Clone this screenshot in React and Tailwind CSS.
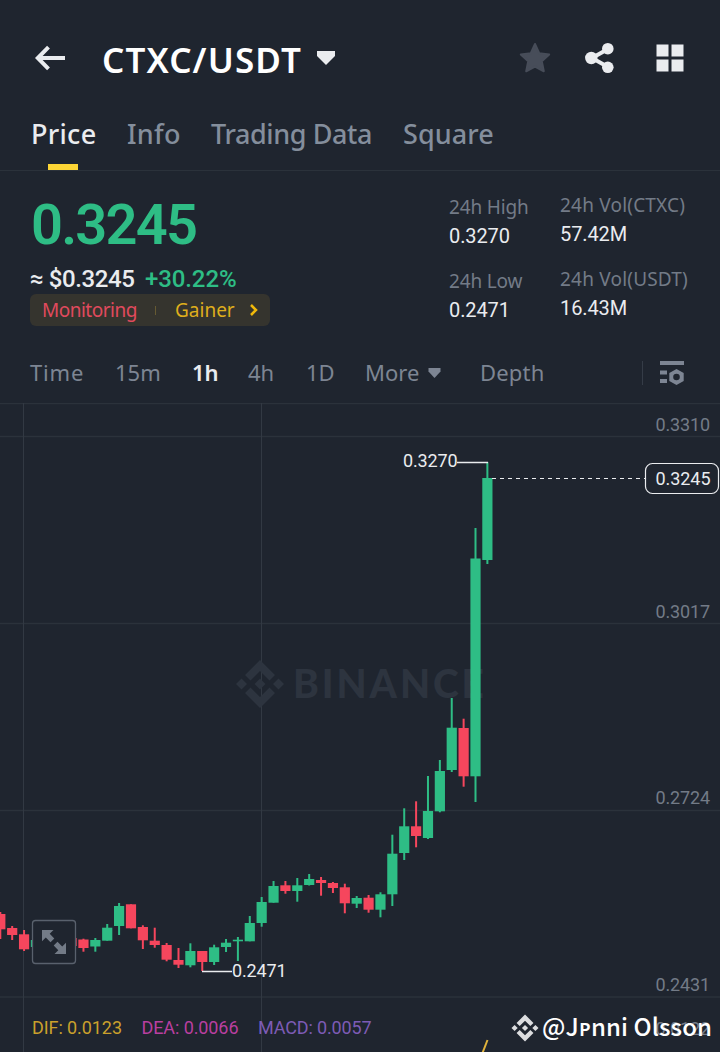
import { useState } from 'react'

const UP = '#2ebd85'
const DOWN = '#f6465d'

// [color, high, bodyTop, bodyBottom, low]
const CANDLES = [
  [DOWN, 912, 914, 929.3, 939],
  [DOWN, 926, 928, 935, 940],
  [DOWN, 930, 934.3, 949.3, 951],
  [UP, 940, 940, 947, 947],
  [UP, 936, 938, 945, 948],
  [DOWN, 934, 937, 944, 948],
  [DOWN, 936, 938, 946, 949],
  [DOWN, 938.7, 939.5, 948, 951.7],
  [UP, 938, 940, 946.5, 951.7],
  [UP, 924, 927.7, 940.7, 940.7],
  [UP, 903, 906, 926, 935],
  [DOWN, 904.3, 904.3, 928.3, 928.3],
  [DOWN, 925.3, 927, 940.3, 949],
  [DOWN, 927.7, 940.7, 945, 947.7],
  [DOWN, 943, 945, 959.7, 961.3],
  [DOWN, 948, 960, 964.7, 968],
  [UP, 943.3, 951, 965.3, 967.3],
  [DOWN, 951, 951, 962, 971],
  [UP, 944.7, 947.3, 962, 965],
  [UP, 939, 942.7, 947, 952],
  [UP, 937, 939.7, 941.3, 961],
  [UP, 916, 923, 941.3, 941.3],
  [UP, 897, 902, 923, 926.7],
  [UP, 881, 886, 902.7, 902.7],
  [DOWN, 881, 885.3, 891, 893.7],
  [UP, 878, 885.3, 891, 901.7],
  [UP, 874, 879, 885, 885.5],
  [DOWN, 877, 880, 883, 895.7],
  [DOWN, 882, 883, 888, 893],
  [DOWN, 883.7, 887.3, 903.3, 913.3],
  [UP, 896, 898, 903.7, 908],
  [DOWN, 895, 897.7, 909.7, 912.7],
  [UP, 892.3, 894.3, 909.7, 917.3],
  [UP, 834.7, 853.7, 894.3, 906],
  [UP, 808.3, 826.3, 853, 860],
  [DOWN, 801.3, 826.3, 836, 847.3],
  [UP, 776, 811, 838, 839],
  [UP, 760, 771, 811.3, 812.3],
  [UP, 698, 727.7, 770, 772],
  [DOWN, 718.7, 728, 776.3, 786.7],
  [UP, 528, 558.5, 776.3, 802],
  [UP, 462, 478, 560, 564],
]

const TABS = [
  { name: 'Price', cls: 'w-[96px] tracking-[0.3px]' },
  { name: 'Info', cls: 'w-[84px] tracking-[0.3px]' },
  { name: 'Trading Data', cls: 'w-[192px] tracking-[-0.4px]' },
  { name: 'Square', cls: 'w-[100px] tracking-[0.1px]' },
]

const INTERVALS = [
  { name: 'Time', cls: 'w-[85px] tracking-[0.8px]' },
  { name: '15m', cls: 'w-[77px]' },
  { name: '1h', cls: 'w-[56px]' },
  { name: '4h', cls: 'w-[58px]' },
  { name: '1D', cls: 'w-[59px]' },
]

const STATS = [
  [
    { label: '24h High', value: '0.3270' },
    { label: '24h Low', value: '0.2471' },
  ],
  [
    { label: '24h Vol(CTXC)', value: '57.42M' },
    { label: '24h Vol(USDT)', value: '16.43M' },
  ],
]

const AXIS = [
  { y: 431, text: '0.3310' },
  { y: 618, text: '0.3017' },
  { y: 804, text: '0.2724' },
  { y: 991, text: '0.2431' },
]

function BinanceMark() {
  return (
    <>
      <path d="M24 0 39 15 33.5 20.5 24 11 14.5 20.5 9 15Z" />
      <path d="M24 48 39 33 33.5 27.5 24 37 14.5 27.5 9 33Z" />
      <path d="M24 18.5 29.5 24 24 29.5 18.5 24Z" />
      <path d="M5.5 18.5 11 24 5.5 29.5 0 24Z" />
      <path d="M42.5 18.5 48 24 42.5 29.5 37 24Z" />
    </>
  )
}

function Header() {
  return (
    <header className="flex h-[112px] items-center pl-[34px] pr-[36px] pt-1">
      <svg width="32" height="26" viewBox="0 0 32 26" fill="none" stroke="#eaecef" strokeWidth="4">
        <path d="M31 13H4M14.5 2.2 3.8 13l10.7 10.8" />
      </svg>
      <h1 className="ml-[36px] mt-[3px] w-[214px] whitespace-nowrap font-['Noto_Sans'] text-[35px] font-semibold leading-none tracking-[1.1px] text-white">CTXC/USDT</h1>
      <svg width="20" height="14" viewBox="0 0 20 14" fill="#eaecef">
        <path d="M1 0H19V5L10 14 1 5Z" />
      </svg>
      <svg className="ml-auto" width="32" height="32" viewBox="0 0 32 32" fill="#474d59" stroke="#474d59" strokeWidth="2" strokeLinejoin="round">
        <path d="m16 2 4.2 9.2 10 1.2-7.400 6.900 2 10L16 24.500 7.200 29.300l2-10-7.400-6.900 10-1.200Z" />
      </svg>
      <svg className="ml-[33px]" width="32" height="32" viewBox="0 0 32 32" fill="#eaecef">
        <path d="M24 7 8 16l16 9" fill="none" stroke="#eaecef" strokeWidth="4" />
        <circle cx="23.800" cy="6.700" r="5.800" />
        <circle cx="7.300" cy="16" r="6.200" />
        <circle cx="23.800" cy="25.300" r="5.800" />
      </svg>
      <svg className="ml-[40px]" width="28" height="28" viewBox="0 0 28 28" fill="#eaecef">
        <path d="M0.500 0.500h12v12h-12zM15.500 0.500h12v12h-12zM0.500 15.500h12v12h-12zM15.500 15.500h12v12h-12z" />
      </svg>
    </header>
  )
}

function Tabs({ active, onChange }) {
  return (
    <nav className="flex h-[59px] border-b border-[#2b323b] pl-[31px]">
      {TABS.map((tab) => (
        <button
          key={tab.name}
          onClick={() => onChange(tab.name)}
          className={`flex flex-col whitespace-nowrap text-left font-['Noto_Sans'] text-[27px] font-medium leading-[44px] ${tab.cls} ${active === tab.name ? 'text-[#eaecef]' : 'text-[#848e9c]'}`}
        >
          {tab.name}
          {active === tab.name && <span className="ml-[17px] mt-[8px] block h-[6px] w-[30px] bg-[#fcd535]" />}
        </button>
      ))}
    </nav>
  )
}

function Ticker() {
  return (
    <section className="flex h-[174px] pl-[30px]">
      <div className="w-[419px]">
        <div className="mt-[24px] h-[60px] pl-px font-['Roboto'] text-[56px] font-semibold leading-[61px] tracking-[-1.8px] text-[#2ebd85]">0.3245</div>
        <div className="mt-[9px] flex h-[30px] whitespace-nowrap font-['Roboto'] text-[24px] font-medium leading-[30px] tracking-[-0.4px]">
          <span className="w-[115px] text-[#eaecef]">≈ $0.3245</span>
          <span className="tracking-[-0.1px] text-[#2ebd85]">+30.22%</span>
        </div>
        <div className="flex h-[32px] w-[240px] items-center rounded-md bg-[#35342e] pl-3 font-['Noto_Sans'] text-[19px]">
          <span className="w-[113px] tracking-[-0.5px] text-[#e04a5d]">Monitoring</span>
          <span className="h-[9px] w-px bg-[#665a32]" />
          <span className="ml-[19px] w-[75px] text-[#dfae1c]">Gainer</span>
          <svg width="8" height="12" viewBox="0 0 8 12" fill="none" stroke="#f0b90b" strokeWidth="2.500">
            <path d="m1 1 5 5-5 5" />
          </svg>
        </div>
      </div>
      {STATS.map((column, i) => (
        <div key={i} className={i === 0 ? 'w-[111px] pt-[22px] tracking-[-0.15px]' : 'pt-[20px] tracking-[0.2px]'}>
          {column.map((item) => (
            <div key={item.label} className="h-[74px] whitespace-nowrap">
              <div className="font-['Noto_Sans'] text-[19px] leading-[28px] text-[#737b87]">{item.label}</div>
              <div className="font-['Roboto'] text-[20px] leading-[31px] tracking-[-0.1px] text-[#eaecef]">{item.value}</div>
            </div>
          ))}
        </div>
      ))}
    </section>
  )
}

function IntervalBar({ active, onChange }) {
  return (
    <div className="flex h-[58px] items-center whitespace-nowrap pl-[30px] font-['Noto_Sans'] text-[22px] text-[#7d8593]">
      {INTERVALS.map((item) => (
        <button
          key={item.name}
          onClick={() => onChange(item.name)}
          className={`-mt-[3px] text-left ${item.cls} ${active === item.name ? 'font-semibold text-[#eaecef]' : ''}`}
        >
          {item.name}
        </button>
      ))}
      <button className="-mt-[3px] flex w-[115px] items-center">
        <span className="w-[63px] text-left">More</span>
        <svg width="13" height="10" viewBox="0 0 12 10" fill="#7d8593">
          <path d="M0 0H12V3.500L6 10 0 3.500Z" />
        </svg>
      </button>
      <button className="-mt-[3px] w-[162px] text-left tracking-[0.2px]">Depth</button>
      <span className="-mt-[3px] h-[24px] w-px bg-[#353c47]" />
      <svg className="-mt-[2px] ml-[17px]" width="25" height="24" viewBox="0 0 25 24" fill="#7d8593">
        <path d="M0 0H24V4H0zM0 9.500H7V13.500H0zM0 18H7V22H0z" />
        <path fillRule="evenodd" d="M16.500 8 23.700 12v8l-7.200 4-7.200-4v-8ZM16.500 12.700a3.300 3.300 0 1 0 0 6.600 3.300 3.300 0 0 0 0-6.600Z" />
      </svg>
    </div>
  )
}

function Chart() {
  return (
    <svg className="block" width="720" height="649" viewBox="0 403 720 649" fontFamily="Roboto, sans-serif">
      <g stroke="#2b323b" strokeWidth="1.500">
        <path d="M0 403.500H720M0 436.500H720M0 623.500H720M0 810.500H720M0 997H720" />
        <path d="M23.500 403V1052M261.500 403V1052" stroke="#323943" strokeWidth="1" />
      </g>

      <g fill="#2d343f">
        <g transform="translate(236 660)">
          <BinanceMark />
        </g>
        <text x="293" y="698" fontFamily="Lato, sans-serif" fontSize="39" fontWeight="900" textLength="191">BINANCE</text>
      </g>

      {CANDLES.map(([color, high, top, bottom, low], i) => {
        const cx = 0.3 + i * 11.88
        return (
          <g key={i} fill={color}>
            <rect x={cx - 1} y={high} width="2" height={low - high} />
            <rect x={cx - 5.1} y={top} width="10.2" height={bottom - top} />
          </g>
        )
      })}

      <g fill="none" stroke="#eaecef">
        <path d="M457 462.500H488M202 971.500H232" strokeWidth="1.300" />
        <path d="M492 478.500H645" strokeDasharray="4 4" strokeWidth="1.200" />
        <rect x="645.500" y="463.500" width="73" height="30" rx="7" fill="#1f252f" strokeWidth="1.200" />
      </g>
      <g fill="#eaecef" fontSize="18">
        <text x="403" y="467" textLength="54.500">0.3270</text>
        <text x="232" y="977" textLength="54.500">0.2471</text>
        <text x="655.500" y="485" textLength="55">0.3245</text>
      </g>
      <g fill="#737b87" fontSize="18">
        {AXIS.map((tick) => (
          <text key={tick.text} x="655.500" y={tick.y} textLength="54.500">{tick.text}</text>
        ))}
        <text x="655.500" y="1035" textLength="54.500">0.0122</text>
      </g>

      <g fontSize="18">
        <text x="32" y="1034" fill="#caa02c" textLength="90">DIF: 0.0123</text>
        <text x="141.500" y="1034" fill="#b93fa0" textLength="97">DEA: 0.0066</text>
        <text x="258" y="1034" fill="#7d5bb5" textLength="113.500">MACD: 0.0057</text>
      </g>
      <path d="M482.500 1053 487.500 1040" stroke="#e0b33c" strokeWidth="2" />

      {/* expand button */}
      <rect x="32.500" y="920.500" width="43" height="43" rx="3" fill="#1f252f" stroke="#59616d" strokeWidth="1.300" />
      <g fill="#737b87">
        <path d="M42 930H53.500L49.700 933.800 54.300 938.400 50.500 942.200 45.800 937.500 42 941.300Z" />
        <path d="M66 954H54.500L58.300 950.200 53.700 945.600 57.500 941.800 62.200 946.500 66 942.700Z" />
      </g>

      {/* author signature */}
      <g transform="translate(511.500 1014.500) scale(.563)" fill="#dcdddf">
        <BinanceMark />
      </g>
      <text x="542" y="1036" fill="#fff" fontFamily="'Noto Sans CJK SC', 'Noto Sans', sans-serif" fontSize="24" fontWeight="500" textLength="170">@Jᴘnni Olsson</text>
    </svg>
  )
}

export default function App() {
  const [tab, setTab] = useState('Price')
  const [interval, setActiveInterval] = useState('1h')

  return (
    <div className="h-[1052px] w-[720px] overflow-hidden bg-[#1f252f]">
      <Header />
      <Tabs active={tab} onChange={setTab} />
      <Ticker />
      <IntervalBar active={interval} onChange={setActiveInterval} />
      <Chart />
    </div>
  )
}
